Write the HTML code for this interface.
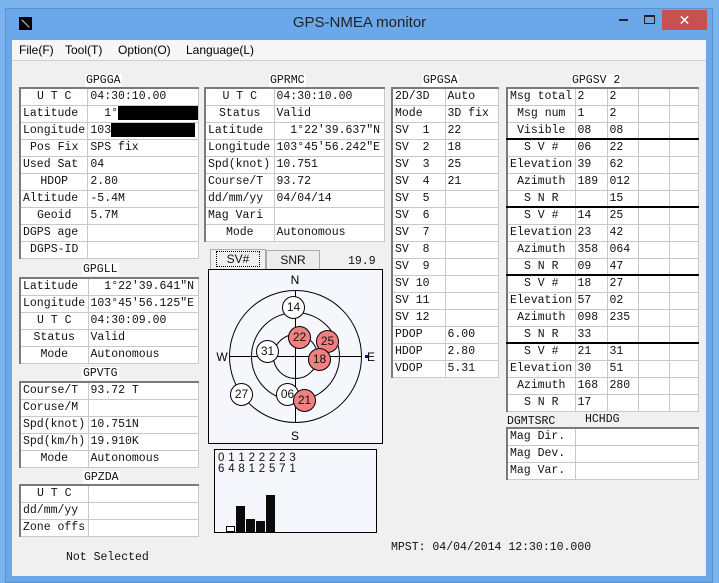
<!DOCTYPE html>
<html><head><meta charset="utf-8"><style>
*{margin:0;padding:0;box-sizing:border-box}
body{width:719px;height:583px;overflow:hidden;background:#7ab4ee;position:relative;font-family:"Liberation Mono",monospace;font-size:11.5px;color:#111}
.a{position:absolute}
#frame{left:5px;top:8px;width:708px;height:575px;background:#6aa8ea;border:1px solid #5a90cc}
#client{left:12px;top:40px;width:694px;height:536px;background:#f0f0f0}
#menu{left:12px;top:40px;width:694px;height:21px;background:#f6f6f6;border-bottom:1px solid #d0d0d0;font-family:"Liberation Sans",sans-serif;font-size:12px;color:#000}
#menu span{position:absolute;top:3px}
table{position:absolute;border-collapse:collapse;background:#fff;border-top:2px solid #7a7a7a;border-left:2px solid #7a7a7a;border-right:1px solid #e4e4e4;border-bottom:1px solid #e4e4e4}
td{border:1px solid #c8c8c8;height:17px;padding:0 0 0 2px;white-space:pre;line-height:15px;overflow:hidden}
td.c{text-align:center;padding:0}
tr.t td{border-bottom:2px solid #000}
.h{position:absolute;font-size:11.5px;background:#fff;padding:0 1px;line-height:13px}
.sat{position:absolute;width:23px;height:23px;border-radius:50%;border:1px solid #000;background:#fff;text-align:center;line-height:21px;font-family:"Liberation Sans",sans-serif;font-size:12px}
.r{background:#f28080}
</style></head><body>
<div class="a" id="frame"></div>
<div class="a" style="left:19px;top:17px;width:13px;height:13px;background:#000"></div>
<div class="a" style="left:20px;top:23px;width:11px;height:1px;background:#ccc;transform:rotate(45deg)"></div>
<div class="a" style="left:0;top:14px;width:719px;text-align:center;font-family:'Liberation Sans',sans-serif;font-size:15px;color:#222">GPS-NMEA monitor</div>
<div class="a" style="left:619px;top:19px;width:9px;height:2px;background:#222"></div>
<div class="a" style="left:644px;top:15px;width:11px;height:9px;border:1px solid #222;border-top-width:2px"></div>
<div class="a" style="left:662px;top:10px;width:45px;height:20px;background:#c75050;color:#fff;text-align:center;font-family:'Liberation Sans',sans-serif;font-size:14px;line-height:20px">✕</div>
<div class="a" id="client"></div>
<div class="a" id="menu"><span style="left:7px">File(F)</span><span style="left:53px">Tool(T)</span><span style="left:106px">Option(O)</span><span style="left:174px">Language(L)</span></div>

<div class="h" style="left:85px;top:74px">GPGGA</div>
<table style="left:19px;top:87px;width:180px"><col style="width:68px"><col>
<tr><td class="c">U T C</td><td>04:30:10.00</td></tr>
<tr><td>Latitude</td><td>  1°<span style="display:inline-block;width:80px;height:14px;background:#000;vertical-align:middle"></span></td></tr>
<tr><td>Longitude</td><td>103<span style="display:inline-block;width:84px;height:14px;background:#000;vertical-align:middle"></span></td></tr>
<tr><td class="c">Pos Fix</td><td>SPS fix</td></tr>
<tr><td>Used Sat</td><td>04</td></tr>
<tr><td class="c">HDOP</td><td>2.80</td></tr>
<tr><td>Altitude</td><td>-5.4M</td></tr>
<tr><td class="c">Geoid</td><td>5.7M</td></tr>
<tr><td>DGPS age</td><td></td></tr>
<tr><td class="c">DGPS-ID</td><td></td></tr>
</table>

<div class="h" style="left:269px;top:74px">GPRMC</div>
<table style="left:204px;top:87px;width:181px"><col style="width:69px"><col>
<tr><td class="c">U T C</td><td>04:30:10.00</td></tr>
<tr><td class="c">Status</td><td>Valid</td></tr>
<tr><td>Latitude</td><td>  1°22'39.637"N</td></tr>
<tr><td>Longitude</td><td>103°45'56.242"E</td></tr>
<tr><td>Spd(knot)</td><td>10.751</td></tr>
<tr><td>Course/T</td><td>93.72</td></tr>
<tr><td>dd/mm/yy</td><td>04/04/14</td></tr>
<tr><td>Mag Vari</td><td></td></tr>
<tr><td class="c">Mode</td><td>Autonomous</td></tr>
</table>

<div class="h" style="left:422px;top:74px">GPGSA</div>
<table style="left:391px;top:87px;width:108px"><col style="width:53px"><col>
<tr><td>2D/3D</td><td>Auto</td></tr>
<tr><td>Mode</td><td>3D fix</td></tr>
<tr><td>SV  1</td><td>22</td></tr>
<tr><td>SV  2</td><td>18</td></tr>
<tr><td>SV  3</td><td>25</td></tr>
<tr><td>SV  4</td><td>21</td></tr>
<tr><td>SV  5</td><td></td></tr>
<tr><td>SV  6</td><td></td></tr>
<tr><td>SV  7</td><td></td></tr>
<tr><td>SV  8</td><td></td></tr>
<tr><td>SV  9</td><td></td></tr>
<tr><td>SV 10</td><td></td></tr>
<tr><td>SV 11</td><td></td></tr>
<tr><td>SV 12</td><td></td></tr>
<tr><td>PDOP</td><td>6.00</td></tr>
<tr><td>HDOP</td><td>2.80</td></tr>
<tr><td>VDOP</td><td>5.31</td></tr>
</table>

<div class="h" style="left:571px;top:74px">GPGSV 2</div>
<table style="left:506px;top:87px;width:193px"><col style="width:68px"><col style="width:32px"><col style="width:31px"><col style="width:31px"><col>
<tr><td>Msg total</td><td>2</td><td>2</td><td></td><td></td></tr>
<tr><td class="c">Msg num</td><td>1</td><td>2</td><td></td><td></td></tr>
<tr class="t"><td class="c">Visible</td><td>08</td><td>08</td><td></td><td></td></tr>
<tr><td class="c">S V #</td><td>06</td><td>22</td><td></td><td></td></tr>
<tr><td>Elevation</td><td>39</td><td>62</td><td></td><td></td></tr>
<tr><td class="c">Azimuth</td><td>189</td><td>012</td><td></td><td></td></tr>
<tr class="t"><td class="c">S N R</td><td></td><td>15</td><td></td><td></td></tr>
<tr><td class="c">S V #</td><td>14</td><td>25</td><td></td><td></td></tr>
<tr><td>Elevation</td><td>23</td><td>42</td><td></td><td></td></tr>
<tr><td class="c">Azimuth</td><td>358</td><td>064</td><td></td><td></td></tr>
<tr class="t"><td class="c">S N R</td><td>09</td><td>47</td><td></td><td></td></tr>
<tr><td class="c">S V #</td><td>18</td><td>27</td><td></td><td></td></tr>
<tr><td>Elevation</td><td>57</td><td>02</td><td></td><td></td></tr>
<tr><td class="c">Azimuth</td><td>098</td><td>235</td><td></td><td></td></tr>
<tr class="t"><td class="c">S N R</td><td>33</td><td></td><td></td><td></td></tr>
<tr><td class="c">S V #</td><td>21</td><td>31</td><td></td><td></td></tr>
<tr><td>Elevation</td><td>30</td><td>51</td><td></td><td></td></tr>
<tr><td class="c">Azimuth</td><td>168</td><td>280</td><td></td><td></td></tr>
<tr><td class="c">S N R</td><td>17</td><td></td><td></td><td></td></tr>
</table>

<div class="a" style="left:507px;top:415px;font-size:11.5px">DGMTSRC</div>
<div class="a" style="left:585px;top:413px;font-size:11.5px">HCHDG</div>
<table style="left:506px;top:427px;width:193px"><col style="width:68px"><col>
<tr><td>Mag Dir.</td><td></td></tr>
<tr><td>Mag Dev.</td><td></td></tr>
<tr><td>Mag Var.</td><td></td></tr>
</table>

<div class="h" style="left:82px;top:263px">GPGLL</div>
<table style="left:19px;top:277px;width:180px"><col style="width:68px"><col>
<tr><td>Latitude</td><td>  1°22'39.641"N</td></tr>
<tr><td>Longitude</td><td>103°45'56.125"E</td></tr>
<tr><td class="c">U T C</td><td>04:30:09.00</td></tr>
<tr><td class="c">Status</td><td>Valid</td></tr>
<tr><td class="c">Mode</td><td>Autonomous</td></tr>
</table>

<div class="h" style="left:82px;top:367px">GPVTG</div>
<table style="left:19px;top:381px;width:180px"><col style="width:68px"><col>
<tr><td>Course/T</td><td>93.72 T</td></tr>
<tr><td>Coruse/M</td><td></td></tr>
<tr><td>Spd(knot)</td><td>10.751N</td></tr>
<tr><td>Spd(km/h)</td><td>19.910K</td></tr>
<tr><td class="c">Mode</td><td>Autonomous</td></tr>
</table>

<div class="h" style="left:83px;top:471px">GPZDA</div>
<table style="left:19px;top:484px;width:180px"><col style="width:68px"><col>
<tr><td class="c">U T C</td><td></td></tr>
<tr><td>dd/mm/yy</td><td></td></tr>
<tr><td>Zone offs</td><td></td></tr>
</table>

<!-- tabs -->
<div class="a" style="left:210px;top:249px;width:56px;height:20px;background:#f0f0f0;border:1px solid #aaa;border-bottom:none;font-family:'Liberation Sans',sans-serif;font-size:12px;text-align:center;line-height:18px"><span style="outline:1px dotted #000;padding:0 10px">SV#</span></div>
<div class="a" style="left:266px;top:250px;width:54px;height:19px;background:#ececec;border:1px solid #aaa;border-bottom:none;font-family:'Liberation Sans',sans-serif;font-size:12px;text-align:center;line-height:18px">SNR</div>
<div class="a" style="left:348px;top:255px">19.9</div>

<svg class="a" style="left:208px;top:269px" width="175" height="175" viewBox="208 269 175 175">
<rect x="208.5" y="269.5" width="174" height="174" fill="#f5f7fd" stroke="#000"/>
<g fill="none" stroke="#000" stroke-width="1">
<circle cx="295.5" cy="356.5" r="66"/><circle cx="295.5" cy="356.5" r="44"/><circle cx="295.5" cy="356.5" r="22"/>
<line x1="229.5" y1="356.5" x2="361.5" y2="356.5"/><line x1="295.5" y1="290.5" x2="295.5" y2="422.5"/>
</g>
<rect x="365" y="355" width="3" height="3" fill="#00f"/>
<g font-family="Liberation Sans,sans-serif" font-size="12" fill="#000" text-anchor="middle">
<text x="295" y="284">N</text><text x="295" y="440">S</text><text x="222" y="361">W</text><text x="371" y="361">E</text>
</g>
</svg>
<div class="sat" style="left:282px;top:296px">14</div>
<div class="sat" style="left:230px;top:383px">27</div>
<div class="sat" style="left:276px;top:383px">06</div>
<div class="sat" style="left:256px;top:340px">31</div>
<div class="sat r" style="left:288px;top:326px">22</div>
<div class="sat r" style="left:316px;top:330px">25</div>
<div class="sat r" style="left:308px;top:348px">18</div>
<div class="sat r" style="left:293px;top:389px">21</div>

<div class="a" style="left:214px;top:449px;width:163px;height:84px;background:#f5f7fd;border:1px solid #000"></div>
<div class="a" style="left:218px;top:453px;font-family:'Liberation Sans',sans-serif;font-size:11.5px;line-height:11px;white-space:pre;letter-spacing:0.3px">0 1 1 2 2 2 2 3
6 4 8 1 2 5 7 1</div>
<div class="a" style="left:226px;top:526px;width:9px;height:6px;border:1px solid #000;background:#fff"></div>
<div class="a" style="left:236px;top:506px;width:9px;height:26px;background:#0a0a0a"></div>
<div class="a" style="left:246px;top:519px;width:9px;height:13px;background:#0a0a0a"></div>
<div class="a" style="left:256px;top:521px;width:9px;height:11px;background:#0a0a0a"></div>
<div class="a" style="left:266px;top:495px;width:9px;height:37px;background:#0a0a0a"></div>

<div class="a" style="left:66px;top:551px">Not Selected</div>
<div class="a" style="left:391px;top:541px">MPST: 04/04/2014 12:30:10.000</div>
</body></html>
